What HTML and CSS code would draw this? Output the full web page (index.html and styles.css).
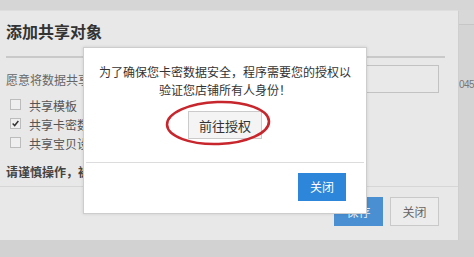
FILE: index.html
```html
<!DOCTYPE html>
<html lang="zh">
<head>
<meta charset="utf-8">
<link rel="stylesheet" href="styles.css">
</head>
<body>
<div class="page">
  <div class="topbar"></div>
  <div class="main">
    <div class="dialog">
      <div class="dlg-head">
        <h1 class="dlg-title">添加共享对象</h1>
      </div>
      <div class="dlg-body">
        <div class="share-row">
          <span class="share-label">愿意将数据共享</span>
          <span class="share-input"></span>
        </div>
        <div class="check-row"><span class="cbox"></span><span class="clabel">共享模板</span></div>
        <div class="check-row"><span class="cbox checked"><svg viewBox="0 0 11 11" width="11" height="11"><path d="M2 5.5 L4.5 8 L9 2.5" fill="none" stroke="#333" stroke-width="1.8"/></svg></span><span class="clabel">共享卡密数据</span></div>
        <div class="check-row"><span class="cbox"></span><span class="clabel">共享宝贝设置</span></div>
        <p class="warn">请谨慎操作，被共享的店铺将可以使用您的数据</p>
      </div>
      <div class="dlg-foot">
        <button class="btn btn-primary-dim">保存</button>
        <button class="btn btn-plain">关闭</button>
      </div>
    </div>
    <div class="side">
      <div class="side-top"></div>
      <div class="side-text">045</div>
    </div>
  </div>
  <div class="modal">
    <div class="modal-body">
      <p class="modal-msg">为了确保您卡密数据安全，程序需要您的授权以<br>验证您店铺所有人身份！</p>
      <button class="btn btn-auth">前往授权</button>
    </div>
    <div class="modal-foot">
      <button class="btn btn-primary">关闭</button>
    </div>
  </div>
  <svg class="mark" viewBox="0 0 108 48" width="108" height="48"><ellipse cx="54" cy="24" rx="51" ry="21" fill="none" stroke="#c8262d" stroke-width="2.6" transform="rotate(-2 54 24)"/></svg>
</div>
</body>
</html>
```

FILE: styles.css
```css
* { box-sizing: border-box; }
html, body { margin: 0; padding: 0; }
body {
  background: #d2d2d2;
  font-family: "Noto Sans CJK SC", "Noto Sans", sans-serif;
  width: 474px;
  height: 257px;
  overflow: hidden;
}
.page { position: relative; width: 474px; height: 257px; }
.topbar { height: 10px; background: #d6d6d6; }
.main { display: flex; height: 230px; }
.dialog {
  width: 459px;
  background: #e8e8e8;
  border-top: 1px solid #dedede;
  border-right: 1px solid #cfcfcf;
  display: flex;
  flex-direction: column;
}
.dlg-head { padding: 0 13px 0 6px; }
.dlg-title {
  margin: 0;
  font-size: 16px;
  font-weight: bold;
  color: #333;
  line-height: 20px;
  padding-top: 10px;
  padding-bottom: 15px;
  border-bottom: 2px solid #c9c9c9;
}
.dlg-body { padding: 7px 19px 0 6px; flex: 1; }
.share-row { display: flex; align-items: center; height: 28px; }
.share-label { font-size: 12px; color: #666; white-space: nowrap; margin-right: 6px; }
.share-input { flex: 1; height: 28px; border: 1px solid #c2c2c2; background: #e9e9e9; }
.share-row + .check-row { margin-top: 3px; }
.check-row { display: flex; align-items: center; height: 19px; padding-left: 4px; }
.cbox {
  width: 11px; height: 11px;
  border: 1px solid #bcbcbc;
  background: #efefef;
  margin-right: 8px;
  display: flex; align-items: center; justify-content: center;
  position: relative;
  top: -1px;
}
.cbox svg { display: block; }
.clabel { font-size: 12px; color: #555; line-height: 19px; }
.warn {
  margin: 11px 0 0;
  font-size: 12px;
  font-weight: bold;
  color: #444;
  line-height: 16px;
  white-space: nowrap;
}
.dlg-foot {
  height: 54px;
  border-top: 1px solid #d6d6d6;
  display: flex;
  justify-content: flex-end;
  align-items: flex-start;
  gap: 7px;
  padding: 10px 19px 0 0;
}
.btn {
  font-family: "Noto Sans CJK SC", "Noto Sans", sans-serif;
  font-size: 12px;
  line-height: 1;
  padding: 0;
  cursor: pointer;
}
.btn-primary-dim {
  width: 49px; height: 29px;
  background: #4a8fd2; color: #e8f0f8;
  border: 1px solid #4a8fd2;
}
.btn-plain {
  width: 49px; height: 29px;
  background: #ececec; color: #666;
  border: 1px solid #c9c9c9;
}
.side { flex: 1; background: #d4d4d4; position: relative; overflow: hidden; }
.side-top { height: 15px; border-bottom: 1px solid #c6c6c6; background: #d8d8d8; }
.side-text {
  position: absolute;
  left: 0; top: 69px;
  font-family: "Liberation Sans", sans-serif;
  font-size: 10px;
  letter-spacing: -0.6px;
  color: #777;
}
.modal {
  position: absolute;
  left: 83px; top: 47px;
  width: 284px; height: 167px;
  background: #fff;
  border: 1px solid #cdcdcd;
  box-shadow: 0 0 3px rgba(0,0,0,0.12);
  display: flex;
  flex-direction: column;
}
.modal-body {
  height: 114px;
  display: flex;
  flex-direction: column;
  align-items: center;
  padding-top: 15px;
}
.modal-msg {
  margin: 0;
  font-size: 12px;
  line-height: 18px;
  color: #333;
  text-align: center;
}
.btn-auth {
  margin-top: 12px;
  width: 74px; height: 28px;
  background: #f4f4f4;
  color: #333;
  border: 1px solid #cbcbcb;
  font-size: 13px;
}
.modal-foot {
  margin: 0 2px;
  border-top: 1px solid #dcdcdc;
  display: flex;
  justify-content: flex-end;
  padding: 10px 18px 0 0;
}
.btn-primary {
  width: 48px; height: 28px;
  background: #2d86d9; color: #fff;
  border: 1px solid #2d86d9;
}
.mark {
  position: absolute;
  left: 164px; top: 99px;
}
```
